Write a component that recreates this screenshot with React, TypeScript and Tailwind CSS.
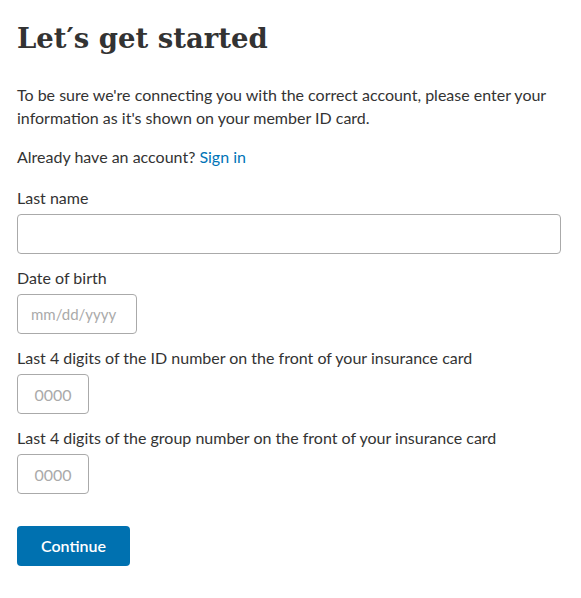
export default function App() {
  return (
    <div className="min-h-screen bg-white px-[17px] pt-[18px] text-[#333] [font-family:Lato,'Liberation_Sans',sans-serif]">
      <h1 className="text-[27.5px] font-bold leading-[40px] text-[#333] [font-family:'DejaVu_Serif',serif]">
        Let′s get started
      </h1>

      <p className="mt-[25px] text-[16px] leading-[23px]">
        To be sure we're connecting you with the correct account, please enter your information as it's shown on your member ID card.
      </p>

      <p className="mt-[16px] text-[16px] leading-[23px]">
        Already have an account?{" "}
        <a href="#" className="text-[#0074b7]">
          Sign in
        </a>
      </p>

      <form className="mt-[19px] flex flex-col gap-[13px]">
        <Field label="Last name" width="w-[544px]" />
        <Field label="Date of birth" width="w-[120px]" placeholder="mm/dd/yyyy" />
        <Field
          label="Last 4 digits of the ID number on the front of your insurance card"
          width="w-[72px] text-center text-[16px]"
          placeholder="0000"
        />
        <Field
          label="Last 4 digits of the group number on the front of your insurance card"
          width="w-[72px] text-center text-[16px]"
          placeholder="0000"
        />
        <div className="pt-[19px]">
          <button
            type="button"
            className="block h-[40px] w-[113px] rounded-[4px] bg-[#0071b0] text-[16px] font-semibold text-white"
          >
            Continue
          </button>
        </div>
      </form>
    </div>
  )
}

function Field({
  label,
  width,
  placeholder = "",
}: {
  label: string
  width: string
  placeholder?: string
}) {
  return (
    <label className="block">
      <span className="mb-[5px] block text-[16px] leading-[22px]">{label}</span>
      <input
        className={`block h-[40px] rounded-[4px] border border-[#aaa] bg-white px-[13px] text-[15px] text-[#333] outline-none placeholder:text-[#aaa] ${width}`}
        placeholder={placeholder}
      />
    </label>
  )
}
